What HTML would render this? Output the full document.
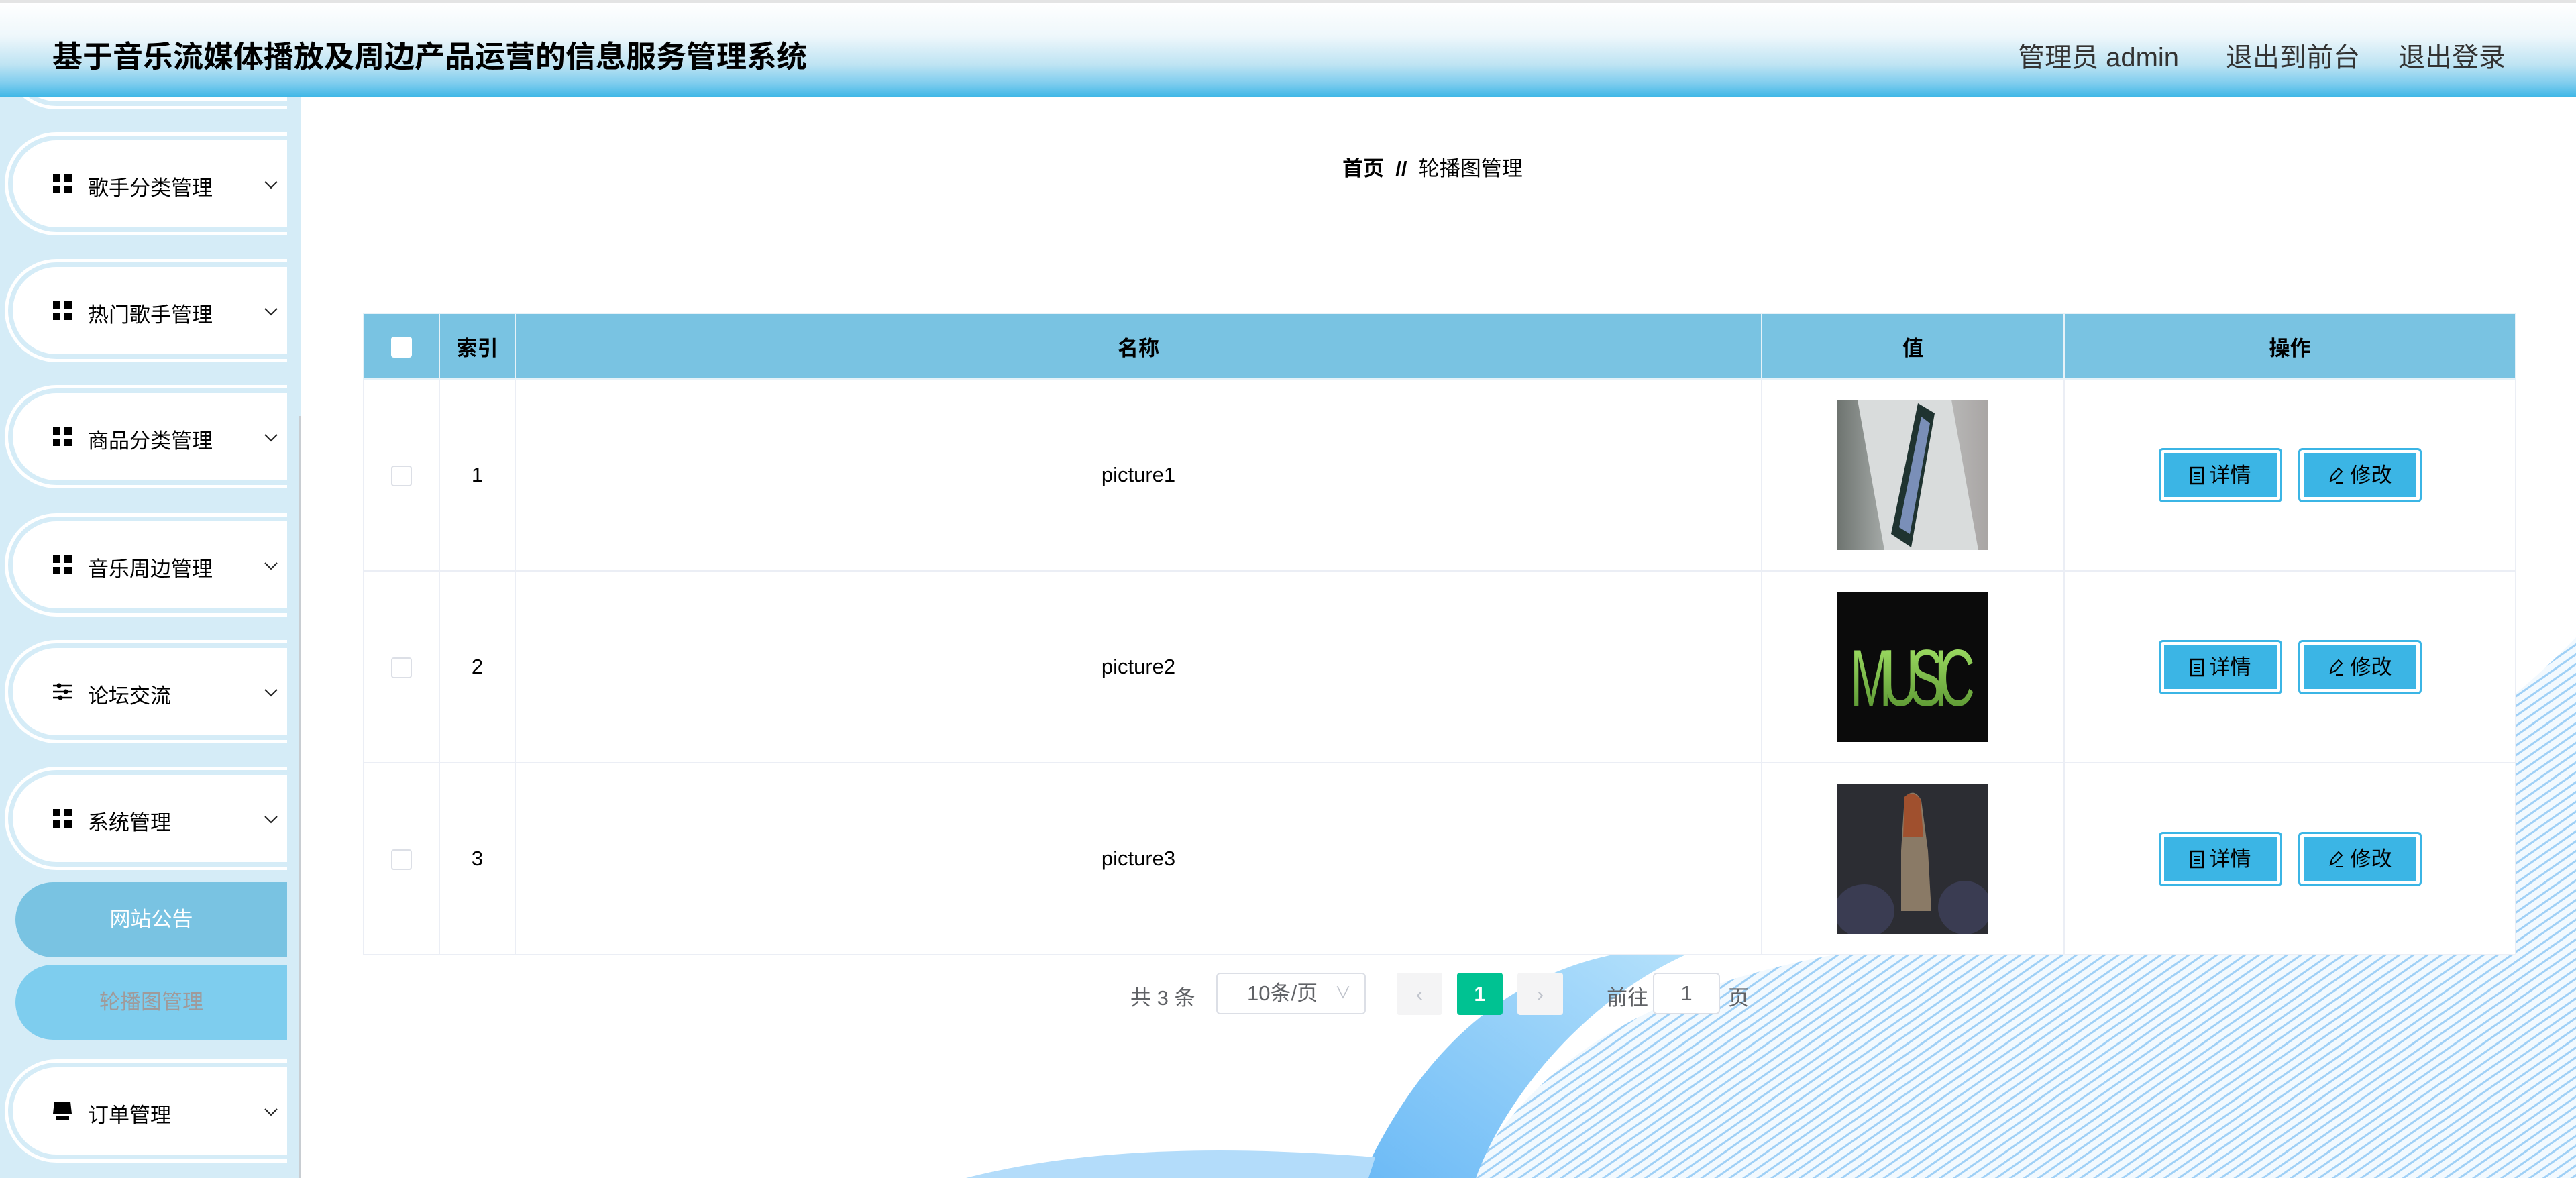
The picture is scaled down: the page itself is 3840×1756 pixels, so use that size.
<!DOCTYPE html>
<html><head><meta charset="utf-8">
<style>
*{margin:0;padding:0;box-sizing:border-box}
html,body{width:3840px;height:1756px;overflow:hidden}
body{background:#fff;font-family:"Liberation Sans","Noto Sans CJK SC",sans-serif;position:relative}
.hdr{position:absolute;left:0;top:0;width:3840px;height:145px;border-top:5px solid #e4e4e4;background:linear-gradient(#ffffff 0%,#eef7fb 35%,#bfe4f3 65%,#7fcdee 85%,#3db6e6 100%)}
.title{position:absolute;left:78px;top:43px;font-size:45px;font-weight:bold;color:#000}
.hr{position:absolute;top:48px;font-size:40px;color:#333}
.side{position:absolute;left:0;top:145px;width:448px;height:1611px;background:#d5ecf7;overflow:hidden}
.sline{position:absolute;left:446px;top:475px;width:3px;height:1240px;background:#c8cdd2}
.it{position:absolute;left:7px;width:421px;height:154px;border:5px solid #fff;border-right:none;border-radius:77px 0 0 77px;padding:7px 0 7px 7px}
.it .in{width:100%;height:100%;background:#fff;border-radius:65px 0 0 65px;position:relative}
.it .ic{position:absolute;left:60px;top:51px;width:28px;height:28px}
.it .tx{position:absolute;left:112px;top:46px;font-size:31px;color:#000;white-space:nowrap}
.it .ch{position:absolute;left:374px;top:60px}
.sub{position:absolute;left:23px;width:405px;height:112px;border-radius:56px 0 0 56px;font-size:31px;text-align:center;line-height:112px}
.bc{position:absolute;left:2001px;top:226px;font-size:31px;color:#000;white-space:nowrap}
table{position:absolute;left:541px;top:466px;border-collapse:collapse;table-layout:fixed;width:3208px;background:#fff}
td,th{border:2px solid #ebeef5;text-align:center;font-size:31px;color:#000}
th{background:#79c3e2;height:98px;font-weight:bold;border-color:#e6f2f8}
td{height:286px;vertical-align:middle}
.cb{display:inline-block;width:31px;height:31px;border:2px solid #dcdfe6;border-radius:4px;background:#fff;vertical-align:middle}
.btn{display:inline-block;width:184px;height:81px;border:3px solid #3bb5e5;border-radius:6px;background:#3bb5e5;box-shadow:inset 0 0 0 5px #fff;font-size:31px;line-height:75px;color:#000;margin:0 12px;vertical-align:middle}
.btn svg{vertical-align:-4px;margin-right:8px}
.pg{position:absolute;top:1450px;font-size:31px;color:#606266}
</style></head><body>
<svg style="position:absolute;left:0;top:0" width="3840" height="1756">
<defs>
<pattern id="hp" width="12" height="12" patternUnits="userSpaceOnUse" patternTransform="rotate(-35)"><rect width="12" height="12" fill="#f2f9fe"/><rect width="12" height="3" fill="#9fd0f6"/></pattern>
<linearGradient id="bg1" x1="0" y1="1" x2="1" y2="0"><stop offset="0" stop-color="#6cbaf6"/><stop offset="1" stop-color="#b5e1fb"/></linearGradient>
</defs>
<path d="M2190 1756 C2300 1560 2500 1440 2900 1400 C3300 1340 3650 1150 3840 950 L3840 1756 Z" fill="url(#hp)"/>
<path d="M3750 1150 C3790 1080 3820 1030 3840 990 L3840 1420 L3750 1420 Z" fill="url(#hp)"/>
<path d="M2030 1756 C2120 1560 2250 1450 2420 1420 L2520 1420 C2380 1480 2250 1620 2200 1756 Z" fill="url(#bg1)"/>
<path d="M1440 1756 C1600 1715 1800 1705 2050 1725 L2040 1756 Z" fill="#b3dcfa"/>
</svg>
<div class="hdr">
<div class="title">基于音乐流媒体播放及周边产品运营的信息服务管理系统</div>
<div class="hr" style="left:3008px">管理员 admin</div>
<div class="hr" style="left:3318px">退出到前台</div>
<div class="hr" style="left:3575px">退出登录</div>
</div>
<div class="bc"><b>首页</b> &nbsp;<b>//</b>&nbsp; 轮播图管理</div>
<table>
<colgroup><col style="width:113px"><col style="width:113px"><col style="width:1858px"><col style="width:451px"><col style="width:673px"></colgroup>
<tr><th><span class="cb" style="border-color:#fff"></span></th><th>索引</th><th>名称</th><th>值</th><th>操作</th></tr>
<tr><td><span class="cb"></span></td><td>1</td><td>picture1</td><td>
<svg width="225" height="224" style="vertical-align:middle"><defs><linearGradient id="i1" x1="0" x2="1"><stop offset="0" stop-color="#6e7470"/><stop offset=".5" stop-color="#c5c9c8"/><stop offset="1" stop-color="#a9a5a4"/></linearGradient></defs><rect width="225" height="224" fill="url(#i1)"/><path d="M30 0 L170 0 L210 224 L70 224 Z" fill="#d9dcdc"/><path d="M120 5 L145 20 L110 220 L80 200 Z" fill="#1f3330"/><path d="M125 25 L138 35 L108 200 L92 190 Z" fill="#7a8fb8"/></svg></td>
<td><span class="btn"><svg width="22" height="28" viewBox="0 0 22 28"><rect x="2" y="2" width="18" height="24" fill="none" stroke="#000" stroke-width="2.5"/><path d="M7 10h8M7 15h8M7 20h8" stroke="#000" stroke-width="2"/></svg>详情</span><span class="btn"><svg width="26" height="28" viewBox="0 0 26 28"><path d="M4 22 L6 14 L16 3 L21 8 L11 19 Z" fill="none" stroke="#000" stroke-width="2"/><path d="M12 25h10" stroke="#000" stroke-width="2"/></svg>修改</span></td></tr>
<tr><td><span class="cb"></span></td><td>2</td><td>picture2</td><td>
<svg width="225" height="224" style="vertical-align:middle"><defs><linearGradient id="i2" x1="0" y1="0" x2="0" y2="1"><stop offset="0" stop-color="#a8e86a"/><stop offset="1" stop-color="#4f8a2a"/></linearGradient></defs><rect width="225" height="224" fill="#0b0b0b"/><text x="112" y="170" text-anchor="middle" font-family="Liberation Sans" font-size="120" fill="url(#i2)" transform="translate(112 0) scale(.62 1) translate(-112 0)" textLength="300">MUSIC</text></svg></td>
<td><span class="btn"><svg width="22" height="28" viewBox="0 0 22 28"><rect x="2" y="2" width="18" height="24" fill="none" stroke="#000" stroke-width="2.5"/><path d="M7 10h8M7 15h8M7 20h8" stroke="#000" stroke-width="2"/></svg>详情</span><span class="btn"><svg width="26" height="28" viewBox="0 0 26 28"><path d="M4 22 L6 14 L16 3 L21 8 L11 19 Z" fill="none" stroke="#000" stroke-width="2"/><path d="M12 25h10" stroke="#000" stroke-width="2"/></svg>修改</span></td></tr>
<tr><td><span class="cb"></span></td><td>3</td><td>picture3</td><td>
<svg width="225" height="224" style="vertical-align:middle"><rect width="225" height="224" fill="#2c2d33"/><ellipse cx="40" cy="190" rx="45" ry="40" fill="#3a3c52"/><ellipse cx="190" cy="185" rx="40" ry="40" fill="#3a3c52"/><path d="M100 20 Q115 5 125 25 L135 100 L140 190 L95 190 L95 100 Z" fill="#8a7a66"/><path d="M100 20 Q112 8 124 24 L128 80 L98 80 Z" fill="#a0502e"/></svg></td>
<td><span class="btn"><svg width="22" height="28" viewBox="0 0 22 28"><rect x="2" y="2" width="18" height="24" fill="none" stroke="#000" stroke-width="2.5"/><path d="M7 10h8M7 15h8M7 20h8" stroke="#000" stroke-width="2"/></svg>详情</span><span class="btn"><svg width="26" height="28" viewBox="0 0 26 28"><path d="M4 22 L6 14 L16 3 L21 8 L11 19 Z" fill="none" stroke="#000" stroke-width="2"/><path d="M12 25h10" stroke="#000" stroke-width="2"/></svg>修改</span></td></tr>
</table>
<div class="pg" style="left:1685px;top:1462px">共 3 条</div>
<div class="pg" style="left:1813px;width:223px;height:62px;border:2px solid #dcdfe6;border-radius:6px;background:#fff;color:#606266;padding-left:44px;line-height:58px">10条/页<span style="position:absolute;right:20px;color:#c0c4cc;font-size:24px">∨</span></div>
<div class="pg" style="left:2082px;width:68px;height:63px;background:#f4f4f5;border-radius:4px;text-align:center;line-height:63px;color:#c0c4cc">‹</div>
<div class="pg" style="left:2172px;width:68px;height:63px;background:#00c292;border-radius:4px;text-align:center;line-height:63px;color:#fff;font-weight:bold">1</div>
<div class="pg" style="left:2262px;width:68px;height:63px;background:#f4f4f5;border-radius:4px;text-align:center;line-height:63px;color:#c0c4cc">›</div>
<div class="pg" style="left:2395px;top:1462px">前往</div>
<div class="pg" style="left:2464px;width:100px;height:62px;border:2px solid #dcdfe6;border-radius:6px;background:#fff;text-align:center;line-height:58px">1</div>
<div class="pg" style="left:2576px;top:1462px">页</div>

<div class="side">
<div class="sline"></div>
<div class="it" style="top:-136px"><div class="in"></div></div>
<div class="it" style="top:52px"><div class="in"><svg class="ic" viewBox="0 0 28 28"><rect x="0" y="0" width="11" height="11"/><rect x="17" y="0" width="11" height="11"/><rect x="0" y="17" width="11" height="11"/><rect x="17" y="17" width="11" height="11"/></svg><span class="tx">歌手分类管理</span><svg class="ch" width="22" height="14"><path d="M2 2 L11 11 L20 2" fill="none" stroke="#222" stroke-width="2"/></svg></div></div>
<div class="it" style="top:241px"><div class="in"><svg class="ic" viewBox="0 0 28 28"><rect x="0" y="0" width="11" height="11"/><rect x="17" y="0" width="11" height="11"/><rect x="0" y="17" width="11" height="11"/><rect x="17" y="17" width="11" height="11"/></svg><span class="tx">热门歌手管理</span><svg class="ch" width="22" height="14"><path d="M2 2 L11 11 L20 2" fill="none" stroke="#222" stroke-width="2"/></svg></div></div>
<div class="it" style="top:429px"><div class="in"><svg class="ic" viewBox="0 0 28 28"><rect x="0" y="0" width="11" height="11"/><rect x="17" y="0" width="11" height="11"/><rect x="0" y="17" width="11" height="11"/><rect x="17" y="17" width="11" height="11"/></svg><span class="tx">商品分类管理</span><svg class="ch" width="22" height="14"><path d="M2 2 L11 11 L20 2" fill="none" stroke="#222" stroke-width="2"/></svg></div></div>
<div class="it" style="top:620px"><div class="in"><svg class="ic" viewBox="0 0 28 28"><rect x="0" y="0" width="11" height="11"/><rect x="17" y="0" width="11" height="11"/><rect x="0" y="17" width="11" height="11"/><rect x="17" y="17" width="11" height="11"/></svg><span class="tx">音乐周边管理</span><svg class="ch" width="22" height="14"><path d="M2 2 L11 11 L20 2" fill="none" stroke="#222" stroke-width="2"/></svg></div></div>
<div class="it" style="top:809px"><div class="in"><svg class="ic" viewBox="0 0 28 28"><path d="M0 5h28M0 14h28M0 23h28" stroke="#000" stroke-width="2.5"/><circle cx="9" cy="5" r="3.5"/><circle cx="19" cy="14" r="3.5"/><circle cx="11" cy="23" r="3.5"/></svg><span class="tx">论坛交流</span><svg class="ch" width="22" height="14"><path d="M2 2 L11 11 L20 2" fill="none" stroke="#222" stroke-width="2"/></svg></div></div>
<div class="it" style="top:998px"><div class="in"><svg class="ic" viewBox="0 0 28 28"><rect x="0" y="0" width="11" height="11"/><rect x="17" y="0" width="11" height="11"/><rect x="0" y="17" width="11" height="11"/><rect x="17" y="17" width="11" height="11"/></svg><span class="tx">系统管理</span><svg class="ch" width="22" height="14"><path d="M2 2 L11 11 L20 2" fill="none" stroke="#222" stroke-width="2"/></svg></div></div>
<div class="sub" style="top:1170px;background:#79c3e2;color:#fff">网站公告</div>
<div class="sub" style="top:1293px;background:#7ecdee;color:#a09a9a">轮播图管理</div>
<div class="it" style="top:1434px"><div class="in"><svg class="ic" viewBox="0 0 28 28"><path d="M2 0h24l2 18H0Z"/><path d="M4 22h20v6H4z"/><path d="M7 18h14v4H7z" fill="#fff"/></svg><span class="tx">订单管理</span><svg class="ch" width="22" height="14"><path d="M2 2 L11 11 L20 2" fill="none" stroke="#222" stroke-width="2"/></svg></div></div>
</div>
</body></html>
